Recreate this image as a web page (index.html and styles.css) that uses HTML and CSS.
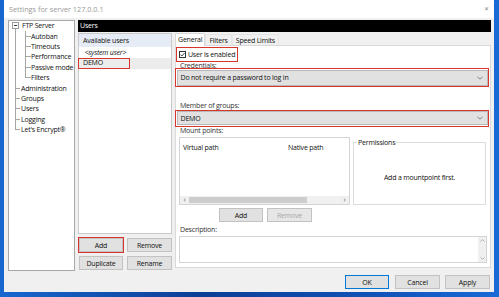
FILE: index.html
```html
<!DOCTYPE html>
<html>
<head>
<meta charset="utf-8">
<link rel="stylesheet" href="styles.css">
</head>
<body>
<div class="window">
  <div class="titlebar">
    <span>Settings for server 127.0.0.1</span>
    <span class="close">✕</span>
  </div>
  <div class="body">
    <div class="tree">
      <div class="row"><span class="g1 first"><span class="exp"></span></span><span class="lbl root-lbl">FTP Server</span></div>
      <div class="row"><span class="g1 v"></span><span class="g2 t"></span><span class="lbl">Autoban</span></div>
      <div class="row"><span class="g1 v"></span><span class="g2 t"></span><span class="lbl">Timeouts</span></div>
      <div class="row"><span class="g1 v"></span><span class="g2 t"></span><span class="lbl">Performance</span></div>
      <div class="row"><span class="g1 v"></span><span class="g2 t"></span><span class="lbl">Passive mode</span></div>
      <div class="row"><span class="g1 v"></span><span class="g2 t last"></span><span class="lbl">Filters</span></div>
      <div class="row"><span class="g1 t"></span><span class="lbl">Administration</span></div>
      <div class="row"><span class="g1 t"></span><span class="lbl">Groups</span></div>
      <div class="row"><span class="g1 t"></span><span class="lbl">Users</span></div>
      <div class="row"><span class="g1 t"></span><span class="lbl">Logging</span></div>
      <div class="row"><span class="g1 t last"></span><span class="lbl">Let's Encrypt®</span></div>
    </div>
    <div class="main">
      <div class="header">Users</div>
      <div class="content">
        <div class="users">
          <div class="userlist">
            <div class="lh">Available users</div>
            <div class="urow sys">&lt;system user&gt;</div>
            <div class="urow sel"><span class="hl-demo">DEMO</span></div>
          </div>
          <div class="userbtns">
            <button class="btn hl-btn">Add</button>
            <button class="btn">Remove</button>
            <button class="btn">Duplicate</button>
            <button class="btn">Rename</button>
          </div>
        </div>
        <div class="tabs">
          <div class="tabstrip">
            <span class="tab active">General</span>
            <span class="tab">Filters</span>
            <span class="tab">Speed Limits</span>
          </div>
          <div class="page">
            <div class="checkrow">
              <span class="hl-check">
                <svg class="cb" width="7" height="7" viewBox="0 0 7 7"><rect x="0.5" y="0.5" width="6" height="6" fill="#fff" stroke="#333" stroke-width="1"/><path d="M1.5 3.6 L2.9 5 L5.5 2" fill="none" stroke="#333" stroke-width="0.9"/></svg>
                <span>User is enabled</span>
              </span>
            </div>
            <div class="label">Credentials:</div>
            <div class="hl-select first-sel">
              <div class="select s1"><span>Do not require a password to log in</span>
                <svg width="6" height="4" viewBox="0 0 6 4"><path d="M0.5 0.7 L3 3.2 L5.5 0.7" fill="none" stroke="#666" stroke-width="0.8"/></svg>
              </div>
            </div>
            <div class="label groups-lbl">Member of groups:</div>
            <div class="hl-select">
              <div class="select s2"><span>DEMO</span>
                <svg width="6" height="4" viewBox="0 0 6 4"><path d="M0.5 0.7 L3 3.2 L5.5 0.7" fill="none" stroke="#666" stroke-width="0.8"/></svg>
              </div>
            </div>
            <div class="label">Mount points:</div>
            <div class="mountrow">
              <div class="mountlist">
                <div class="mhead"><span class="col1">Virtual path</span><span class="col2">Native path</span></div>
                <div class="mspace"></div>
                <div class="hscroll">
                  <span class="arr">‹</span>
                  <span class="thumb"></span>
                  <span class="arr right">›</span>
                </div>
              </div>
              <fieldset class="perms">
                <legend>Permissions</legend>
                <div class="perm-msg">Add a mountpoint first.</div>
              </fieldset>
            </div>
            <div class="mbtns">
              <button class="btn">Add</button>
              <button class="btn disabled">Remove</button>
            </div>
            <div class="label desc-lbl">Description:</div>
            <div class="desc">
              <div class="desc-text"></div>
              <div class="vscroll">
                <svg width="5" height="3" viewBox="0 0 5 3"><path d="M0.5 2.6 L2.5 0.6 L4.5 2.6" fill="none" stroke="#999" stroke-width="0.7"/></svg>
                <svg width="5" height="3" viewBox="0 0 5 3"><path d="M0.5 0.4 L2.5 2.4 L4.5 0.4" fill="none" stroke="#999" stroke-width="0.7"/></svg>
              </div>
            </div>
          </div>
        </div>
      </div>
    </div>
  </div>
  <div class="footer">
    <button class="btn fbtn ok">OK</button>
    <button class="btn fbtn">Cancel</button>
    <button class="btn fbtn apply">Apply</button>
  </div>
</div>
</body>
</html>
```
FILE: styles.css
```css
html, body {
  margin: 0;
  height: 100%;
}
body {
  background: linear-gradient(to right, #1866cf 0%, #0c3f96 40%, #1152b8 75%, #1a6ad6 100%);
  font-family: "Open Sans", "Noto Sans", sans-serif;
  font-size: 7px;
  letter-spacing: -0.2px;
  color: #111;
  overflow: hidden;
}
.window {
  margin-left: 4px;
  width: 490px;
  height: 292px;
  background: #f0f0f0;
  display: flex;
  flex-direction: column;
}
.titlebar {
  height: 18px;
  flex: none;
  background: #fff;
  display: flex;
  align-items: center;
  justify-content: space-between;
  padding: 0 5px 0 5px;
  color: #9a9a9a;
  font-size: 7.3px;
  letter-spacing: 0;
}
.close {
  font-size: 6px;
  color: #888;
}
.body {
  height: 254px;
  flex: none;
  box-sizing: border-box;
  display: flex;
  gap: 3px;
  padding: 1.5px 3px 0 4px;
}
.tree {
  width: 67px;
  height: 251px;
  box-sizing: border-box;
  background: #fff;
  border: 1px solid #a8a8a8;
  padding-left: 1px;
  flex: none;
  overflow: hidden;
}
.row {
  display: flex;
  height: 10.4px;
  align-items: center;
  white-space: nowrap;
}
.g1, .g2 {
  align-self: stretch;
  flex: none;
}
.g1 { width: 11px; }
.g2 { width: 10px; }
.g1.v {
  background: linear-gradient(#a5a5a5, #a5a5a5) 5px 0 / 1px 100% no-repeat;
}
.g1.t {
  background:
    linear-gradient(#a5a5a5, #a5a5a5) 5px 0 / 1px 100% no-repeat,
    linear-gradient(#a5a5a5, #a5a5a5) 5px 50% / 5px 1px no-repeat;
}
.g1.t.last {
  background:
    linear-gradient(#a5a5a5, #a5a5a5) 5px 0 / 1px 50% no-repeat,
    linear-gradient(#a5a5a5, #a5a5a5) 5px 50% / 5px 1px no-repeat;
}
.g2.t {
  background:
    linear-gradient(#a5a5a5, #a5a5a5) 4px 0 / 1px 100% no-repeat,
    linear-gradient(#a5a5a5, #a5a5a5) 4px 50% / 6px 1px no-repeat;
}
.g2.t.last {
  background:
    linear-gradient(#a5a5a5, #a5a5a5) 4px 0 / 1px 50% no-repeat,
    linear-gradient(#a5a5a5, #a5a5a5) 4px 50% / 6px 1px no-repeat;
}
.g1.first {
  display: flex;
  align-items: center;
  justify-content: center;
  background: linear-gradient(#a5a5a5, #a5a5a5) 5px 100% / 1px 50% no-repeat;
}
.exp {
  width: 7px;
  height: 7px;
  box-sizing: border-box;
  border: 1px solid #9a9a9a;
  background: linear-gradient(#333, #333) center / 3px 1px no-repeat, #fff;
}
.root-lbl { margin-left: 1px; }

.main {
  flex: 1;
  display: flex;
  flex-direction: column;
}
.header {
  height: 12px;
  background: #000;
  color: #fff;
  line-height: 12px;
  padding-left: 2px;
  flex: none;
}
.content {
  display: flex;
  gap: 3px;
  margin-top: 1.5px;
}
.users {
  width: 94px;
  flex: none;
  display: flex;
  flex-direction: column;
}
.userlist {
  height: 201px;
  box-sizing: border-box;
  background: #fff;
  border: 1px solid #c9c9c9;
}
.lh {
  height: 13px;
  line-height: 13px;
  background: #e6ecf5;
  padding-left: 4px;
}
.urow {
  height: 10.5px;
  line-height: 10.5px;
}
.urow.sys {
  font-style: italic;
  padding-left: 5.5px;
  margin-top: 0.5px;
}
.urow.sel {
  background: #ececec;
}
.hl-demo {
  display: inline-block;
  box-sizing: border-box;
  width: 52px;
  height: 11px;
  line-height: 8px;
  margin-left: -1px;
  padding-left: 4px;
  border: 1.5px solid #d8352d;
}
.userbtns {
  display: grid;
  grid-template-columns: 44px 45px;
  column-gap: 4px;
  row-gap: 4px;
  margin-top: 4px;
  padding-left: 1px;
}
.btn {
  font-family: inherit;
  font-size: 7px;
  letter-spacing: -0.2px;
  color: #111;
  height: 14px;
  padding: 0;
  margin: 0;
  box-sizing: border-box;
  background: #e1e1e1;
  border: 1px solid #c2c2c2;
}
.hl-btn {
  outline: 1.5px solid #d8352d;
  outline-offset: 0.5px;
}
.btn.disabled {
  color: #a8a8a8;
  background: #e6e6e6;
}

.tabs {
  flex: 1;
  display: flex;
  flex-direction: column;
}
.tabstrip {
  height: 12px;
  display: flex;
  align-items: flex-end;
}
.tab {
  height: 11px;
  line-height: 11px;
  padding: 0 3px;
  box-sizing: border-box;
  border: 1px solid #e4e4e4;
  border-bottom: none;
  background: #f0f0f0;
}
.tab.active {
  height: 13px;
  line-height: 12px;
  background: #fff;
  border-color: #d9d9d9;
  padding: 0 2px;
  margin-bottom: -1px;
  position: relative;
  z-index: 1;
}
.page {
  height: 223px;
  box-sizing: border-box;
  background: #fff;
  border: 1px solid #d9d9d9;
  padding: 0.7px 3px 0 3px;
  display: flex;
  flex-direction: column;
  align-items: stretch;
}
.checkrow {
  display: flex;
}
.hl-check {
  display: inline-flex;
  align-items: center;
  gap: 2px;
  height: 15px;
  box-sizing: border-box;
  border: 1.5px solid #d8352d;
  margin-left: -3.3px;
  padding: 0 2px 0 2.2px;
}
.cb { flex: none; }
.label {
  height: 8px;
  line-height: 8px;
  padding-left: 1px;
  color: #333;
}
.hl-select {
  border: 1.5px solid #d8352d;
  padding: 0.5px;
  margin: 0 -2px 0 -4px;
}
.first-sel { margin-top: -1.4px; }
.select {
  box-sizing: border-box;
  border: 1px solid #b9b9b9;
  background: #e1e1e1;
  display: flex;
  align-items: center;
  justify-content: space-between;
  padding: 0 4px 0 3px;
}
.s1 { height: 16px; }
.s2 { height: 14px; }
.groups-lbl { margin-top: 14.7px; }
.mountrow {
  display: flex;
  align-items: flex-end;
  gap: 3px;
  margin-top: 2px;
}
.mountlist {
  width: 171px;
  height: 68px;
  box-sizing: border-box;
  border: 1px solid #d4d4d4;
  display: flex;
  flex-direction: column;
}
.mhead {
  display: flex;
  padding: 5px 0 0 3px;
  height: 16px;
  box-sizing: border-box;
}
.col1 { width: 105px; }
.mspace { flex: 1; }
.hscroll {
  height: 8px;
  background: #f0f0f0;
  display: flex;
  align-items: center;
  color: #555;
  font-size: 7px;
}
.arr {
  width: 9px;
  text-align: center;
  line-height: 8px;
}
.arr.right { margin-left: auto; }
.thumb {
  width: 118px;
  height: 6px;
  background: #cdcdcd;
}
.perms {
  width: 133px;
  height: 65px;
  box-sizing: border-box;
  margin: 0;
  padding: 0;
  border: 1px solid #dcdcdc;
  display: flex;
  flex-direction: column;
}
.perms legend {
  padding: 0 1px;
  margin-left: 3px;
  line-height: 6px;
}
.perm-msg {
  text-align: center;
  margin-top: 27px;
}
.mbtns {
  display: flex;
  gap: 4px;
  padding-left: 40px;
  margin-top: 3.3px;
}
.mbtns .btn:first-child { width: 44px; }
.mbtns .btn:last-child { width: 45px; }
.desc-lbl { margin-top: 4px; }
.desc {
  height: 27px;
  margin-top: 2px;
  box-sizing: border-box;
  border: 1px solid #d4d4d4;
  display: flex;
}
.desc-text { flex: 1; }
.vscroll {
  width: 8px;
  background: #f0f0f0;
  display: flex;
  flex-direction: column;
  justify-content: space-between;
  align-items: center;
  padding: 2px 0;
}
.footer {
  flex: 1;
  display: flex;
  justify-content: flex-end;
  align-items: center;
  gap: 5px;
  padding-right: 4px;
}
.fbtn { width: 45px; }
.ok {
  width: 44px;
  border: 1px solid #0078d7;
  margin-right: 1px;
}
```
